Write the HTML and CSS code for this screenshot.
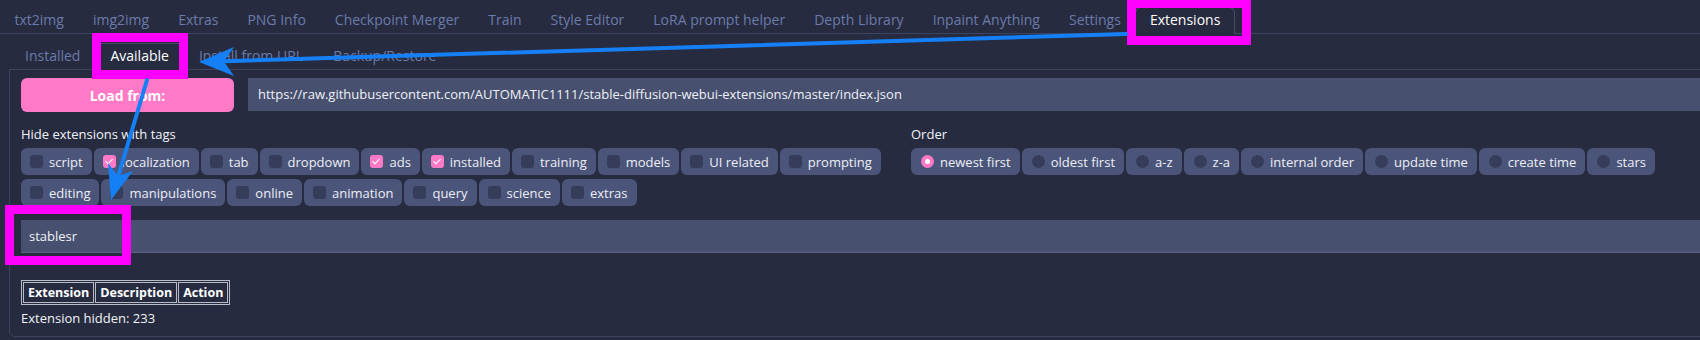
FILE: index.html
```html
<!DOCTYPE html>
<html lang="en">
<head>
    <meta charset="UTF-8">
    <title>Extensions - Available</title>
    <link rel="stylesheet" href="styles.css">
</head>
<body>
<div class="page">
    <div class="tabs">
        <span class="tab">txt2img</span>
        <span class="tab">img2img</span>
        <span class="tab">Extras</span>
        <span class="tab">PNG Info</span>
        <span class="tab">Checkpoint Merger</span>
        <span class="tab">Train</span>
        <span class="tab">Style Editor</span>
        <span class="tab">LoRA prompt helper</span>
        <span class="tab">Depth Library</span>
        <span class="tab">Inpaint Anything</span>
        <span class="tab">Settings</span>
        <span class="tab selected">Extensions</span>
    </div>

    <div class="subtabs">
        <span class="tab">Installed</span>
        <span class="tab selected">Available</span>
        <span class="tab">Install from URL</span>
        <span class="tab">Backup/Restore</span>
    </div>

    <div class="panel">
        <div class="load-row">
            <button class="load-btn">Load from:</button>
            <div class="text-input url">https://raw.githubusercontent.com/AUTOMATIC1111/stable-diffusion-webui-extensions/master/index.json</div>
        </div>

        <div class="filters">
            <div class="filter-group tags">
                <div class="label">Hide extensions with tags</div>
                <div class="chips">
                    <span class="chip"><i class="box"></i>script</span>
                    <span class="chip"><i class="box checked"></i>localization</span>
                    <span class="chip"><i class="box"></i>tab</span>
                    <span class="chip"><i class="box"></i>dropdown</span>
                    <span class="chip"><i class="box checked"></i>ads</span>
                    <span class="chip"><i class="box checked"></i>installed</span>
                    <span class="chip"><i class="box"></i>training</span>
                    <span class="chip"><i class="box"></i>models</span>
                    <span class="chip"><i class="box"></i>UI related</span>
                    <span class="chip"><i class="box"></i>prompting</span>
                    <span class="chip"><i class="box"></i>editing</span>
                    <span class="chip"><i class="box"></i>manipulations</span>
                    <span class="chip"><i class="box"></i>online</span>
                    <span class="chip"><i class="box"></i>animation</span>
                    <span class="chip"><i class="box"></i>query</span>
                    <span class="chip"><i class="box"></i>science</span>
                    <span class="chip"><i class="box"></i>extras</span>
                </div>
            </div>
            <div class="filter-group">
                <div class="label">Order</div>
                <div class="chips">
                    <span class="chip"><i class="radio checked"></i>newest first</span>
                    <span class="chip"><i class="radio"></i>oldest first</span>
                    <span class="chip"><i class="radio"></i>a-z</span>
                    <span class="chip"><i class="radio"></i>z-a</span>
                    <span class="chip"><i class="radio"></i>internal order</span>
                    <span class="chip"><i class="radio"></i>update time</span>
                    <span class="chip"><i class="radio"></i>create time</span>
                    <span class="chip"><i class="radio"></i>stars</span>
                </div>
            </div>
        </div>

        <div class="text-input search">stablesr</div>

        <table class="ext-table">
            <tr>
                <th>Extension</th>
                <th>Description</th>
                <th>Action</th>
            </tr>
        </table>
        <p class="hidden-count">Extension hidden: 233</p>
    </div>

    <!-- annotation overlay -->
    <svg class="annotations" width="1700" height="340" viewBox="0 0 1700 340">
        <g fill="none" stroke="#ff00ff" stroke-width="9">
            <rect x="1131.5" y="3.5" width="115" height="37"/>
            <rect x="96.5" y="37.5" width="87" height="37"/>
            <rect x="9.5" y="209.5" width="117" height="51"/>
        </g>
        <g stroke="#1580f6" stroke-width="4" stroke-linecap="round">
            <line x1="1126" y1="34" x2="224" y2="61.2"/>
            <line x1="147" y1="80" x2="118" y2="177"/>
        </g>
        <g fill="#1580f6">
            <polygon points="199,62 234,47 224,61.5 234,76"/>
            <polygon points="111,200 108,163 118,176 133,171"/>
        </g>
    </svg>
</div>
</body>
</html>
```

FILE: styles.css
```css
body {
    margin: 0;
    padding: 0;
    background: #262b3f;
    font-family: "Open Sans", Arial, sans-serif;
    color: #e6e8f2;
    overflow: hidden;
}

.page {
    position: relative;
    width: 1820px;
    height: 340px;
}

/* Tab bars */
.tabs {
    display: flex;
    align-items: flex-end;
    padding-top: 7px;
    border-bottom: 1px solid #3d4461;
}

.tab {
    display: block;
    padding: 2px 13.5px 3px;
    border: 1px solid transparent;
    border-bottom: none;
    line-height: 20px;
    font-size: 14px;
    color: #6b7bab;
    white-space: nowrap;
}

.tab.selected {
    color: #fff;
    border-color: #454d6b;
    border-radius: 6px 6px 0 0;
    background: #262b3f;
    margin-bottom: -1px;
    padding-bottom: 4px;
}

.subtabs {
    display: flex;
    align-items: flex-end;
    padding-top: 9px;
    padding-left: 10px;
    position: relative;
    z-index: 1;
}

.subtabs .tab {
    padding-left: 14px;
    padding-right: 14px;
}

/* Panel */
.panel {
    margin-left: 9px;
    border: 1px solid #3d4461;
    border-radius: 0 0 0 6px;
    padding: 8px 0 10px 11px;
}

.load-row {
    display: flex;
    gap: 14px;
    align-items: flex-start;
}

.load-btn {
    width: 213px;
    height: 34px;
    border: none;
    border-radius: 6px;
    background: #ff7ac6;
    color: #fff;
    font-family: inherit;
    font-size: 14px;
    font-weight: 700;
}

.text-input {
    background: #47506f;
    color: #eef0f7;
    font-size: 13px;
    line-height: 33px;
    height: 33px;
    padding: 0 10px;
    white-space: nowrap;
}

.url {
    flex: 1;
}

.search {
    margin-top: 14px;
    padding-left: 8px;
    border-bottom: 1px solid #56608a;
    height: 32px;
    line-height: 32px;
}

/* Filters */
.filters {
    display: grid;
    grid-template-columns: 886px 1fr;
    gap: 4px;
    margin-top: 13px;
}

.label {
    font-size: 13px;
    line-height: 18px;
    color: #f2f3f8;
    margin-bottom: 5px;
}

.chips {
    display: flex;
    flex-wrap: wrap;
    gap: 4px 2px;
}

.chip {
    display: flex;
    align-items: center;
    gap: 6px;
    height: 27px;
    padding: 0 9px 0 9px;
    background: #4b5579;
    border-radius: 6px;
    font-size: 13px;
    color: #eceef6;
    white-space: nowrap;
}

.box {
    width: 13px;
    height: 13px;
    border-radius: 3px;
    background: #363d5a;
    position: relative;
}

.box.checked {
    background: #ff79c6;
}

.box.checked::after {
    content: "";
    position: absolute;
    left: 4px;
    top: 2px;
    width: 3px;
    height: 6px;
    border: solid #fff;
    border-width: 0 1.5px 1.5px 0;
    transform: rotate(45deg);
}

.radio {
    width: 13px;
    height: 13px;
    border-radius: 50%;
    background: #363d5a;
    position: relative;
    margin-left: 1px;
}

.radio.checked {
    background: #ff79c6;
}

.radio.checked::after {
    content: "";
    position: absolute;
    left: 4px;
    top: 4px;
    width: 5px;
    height: 5px;
    border-radius: 50%;
    background: #fff;
}

/* Results table */
.ext-table {
    margin-top: 27px;
    border: 1px solid #b9bcc7;
    border-spacing: 1px;
}

.ext-table th {
    border: 1px solid #b9bcc7;
    padding: 0 4px;
    height: 19px;
    font-size: 12.5px;
    font-weight: 700;
    color: #fff;
    text-align: left;
}

.hidden-count {
    margin: 5px 0 0;
    font-size: 13px;
    line-height: 16px;
    color: #f2f3f8;
}

/* Annotation overlay */
.annotations {
    position: absolute;
    left: 0;
    top: 0;
    pointer-events: none;
    z-index: 5;
}
```
